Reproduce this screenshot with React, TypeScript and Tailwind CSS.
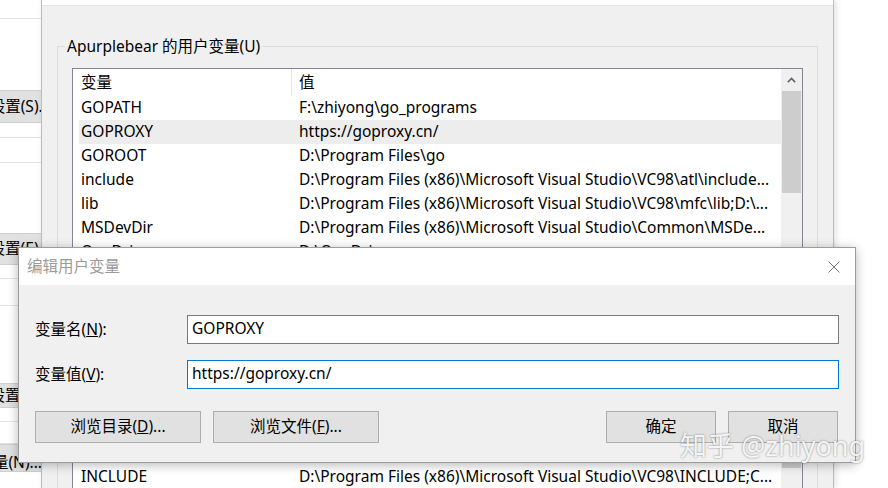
import type { ReactNode } from 'react'

const font = { fontFamily: '"Noto Sans", "Noto Sans CJK SC", sans-serif' }

type Row = { name: string; value: string; hot?: boolean }

const userVars: Row[] = [
  { name: 'GOPATH', value: 'F:\\zhiyong\\go_programs' },
  { name: 'GOPROXY', value: 'https://goproxy.cn/', hot: true },
  { name: 'GOROOT', value: 'D:\\Program Files\\go' },
  { name: 'include', value: 'D:\\Program Files (x86)\\Microsoft Visual Studio\\VC98\\atl\\include...' },
  { name: 'lib', value: 'D:\\Program Files (x86)\\Microsoft Visual Studio\\VC98\\mfc\\lib;D:\\...' },
  { name: 'MSDevDir', value: 'D:\\Program Files (x86)\\Microsoft Visual Studio\\Common\\MSDe...' },
  { name: 'OneDrive', value: 'D:\\OneDrive' },
  { name: 'Path', value: 'D:\\Program Files (x86)\\Microsoft Visual Studio\\Common\\Tools\\...' },
  { name: 'TEMP', value: '%USERPROFILE%\\AppData\\Local\\Temp' },
]

const sysVars: Row[] = [
  { name: 'ComSpec', value: 'C:\\WINDOWS\\system32\\cmd.exe' },
  { name: 'DriverData', value: 'C:\\Windows\\System32\\Drivers\\DriverData' },
  { name: 'FPS_BROWSER', value: 'application' },
  { name: 'INCLUDE', value: 'D:\\Program Files (x86)\\Microsoft Visual Studio\\VC98\\INCLUDE;C...' },
]

function ListView({ rows, height, thumbTop, thumbHeight }: { rows: Row[]; height: string; thumbTop: string; thumbHeight: string }) {
  return (
    <div className={`mx-[14px] mt-[12px] flex overflow-hidden border border-[#828790] bg-white ${height}`}>
      <div className="min-w-0 flex-1">
        <div className="flex h-[27px] items-center">
          <div className="w-[218px] pl-[8px]">变量</div>
          <div className="h-full w-px bg-[#e5e5e5]" />
          <div className="pl-[7px]">值</div>
        </div>
        <div className="pl-[6px]">
          {rows.map((r) => (
            <div key={r.name} className={`flex h-[24px] items-center ${r.hot ? 'bg-[#ededed]' : ''}`}>
              <div className="w-[220px] shrink-0 pl-[2px]">{r.name}</div>
              <div className="min-w-0 flex-1 overflow-hidden text-ellipsis whitespace-nowrap">{r.value}</div>
            </div>
          ))}
        </div>
      </div>
      <div className="flex w-[21px] shrink-0 flex-col bg-[#f0f0f0]">
        <div className="flex h-[22px] items-center justify-center">
          <svg width="9" height="6" viewBox="0 0 9 6">
            <path d="M0.8 5.2 L4.5 1.5 L8.2 5.2" fill="none" stroke="#606060" strokeWidth="1.6" />
          </svg>
        </div>
        <div className={`mx-[1px] bg-[#cdcdcd] ${thumbTop} ${thumbHeight}`} />
      </div>
    </div>
  )
}

function GroupBox({ title, children, className }: { title: string; children: ReactNode; className: string }) {
  return (
    <fieldset className={`mx-[15px] border border-[#dcdcdc] px-0 ${className}`}>
      <legend className="ml-[7px] px-[2px] leading-[20px]">{title}</legend>
      {children}
    </fieldset>
  )
}

function Band({ text, className, pr }: { text: string; className: string; pr: string }) {
  return (
    <div className={`flex items-center justify-end overflow-hidden whitespace-nowrap border-y border-[#cfcfcf] bg-[#e1e1e1] ${pr} ${className}`}>
      <span className="shrink-0">{text}</span>
    </div>
  )
}

function Button({ children, w }: { children: ReactNode; w: string }) {
  return (
    <div className={`flex h-[32px] items-center justify-center border border-[#adadad] bg-[#e1e1e1] ${w}`}>{children}</div>
  )
}

export default function App() {
  return (
    <div className="relative h-[488px] w-[888px] overflow-hidden bg-white text-[15.5px] text-black" style={font}>
      {/* window behind, left edge */}
      <div className="absolute left-0 top-0 flex h-full w-[51px] flex-col bg-white">
        <div className="h-[19px] shrink-0 border-b border-[#e3e3e3]" />
        <div className="h-[71px] shrink-0" />
        <Band text="设置(S)..." className="h-[33px] shrink-0" pr="pr-0" />
        <div className="h-[15px] shrink-0 border-b border-[#e3e3e3]" />
        <div className="h-[25px] shrink-0 border-b border-[#e3e3e3]" />
        <div className="h-[70px] shrink-0" />
        <Band text="设置(E)..." className="h-[32px] shrink-0" pr="pr-0" />
        <div className="h-[14px] shrink-0 border-b border-[#e3e3e3]" />
        <div className="h-[27px] shrink-0 border-b border-[#e3e3e3]" />
        <div className="h-[77px] shrink-0" />
        <Band text="设置(T)..." className="h-[25px] shrink-0" pr="pr-0" />
        <div className="h-[14px] shrink-0 border-b border-[#e3e3e3]" />
        <div className="h-[22px] shrink-0 border-b border-[#e3e3e3]" />
        <Band text="环境变量(N)..." className="h-[28px] shrink-0 pt-[10px]" pr="pr-[9px]" />
      </div>

      {/* environment variables window */}
      <div className="absolute left-[41px] top-0 flex h-full w-[793px] flex-col border-x border-[#bcbcbc] bg-[#f0f0f0] shadow-[2px_0_6px_rgba(0,0,0,0.12)]">
        <div className="h-[6px] shrink-0 border-b border-[#e4e4e4] bg-white" />
        <GroupBox title="Apurplebear 的用户变量(U)" className="mt-[30px] pb-[11px]">
          <ListView rows={userVars} height="h-[236px]" thumbTop="mt-0" thumbHeight="h-[102px]" />
        </GroupBox>
        <GroupBox title="系统变量(S)" className="mt-[17px] pb-[11px]">
          <ListView rows={sysVars} height="h-[200px]" thumbTop="mt-[60px]" thumbHeight="h-[20px]" />
        </GroupBox>
      </div>

      {/* edit dialog */}
      <div className="absolute left-[18px] top-[247px] flex h-[216px] w-[838px] flex-col border border-[#9c9c9c] bg-[#f0f0f0] shadow-[0_2px_10px_rgba(0,0,0,0.28)]">
        <div className="flex h-[37px] shrink-0 items-center justify-between bg-white pl-[8px] pr-[15px]">
          <span className="text-[#9a9a9a]">编辑用户变量</span>
          <svg width="12" height="12" viewBox="0 0 12 12">
            <path d="M0.5 0.5 L11.5 11.5 M11.5 0.5 L0.5 11.5" stroke="#777" strokeWidth="1" fill="none" />
          </svg>
        </div>
        <div className="flex flex-col px-[16px] pt-[30px]">
          <div className="flex items-center">
            <div className="w-[152px] shrink-0">
              变量名(<span className="underline">N</span>):
            </div>
            <div className="flex h-[29px] flex-1 items-center border border-[#7a7a7a] bg-white pb-[2px] pl-[4px]">GOPROXY</div>
          </div>
          <div className="mt-[16px] flex items-center">
            <div className="w-[152px] shrink-0">
              变量值(<span className="underline">V</span>):
            </div>
            <div className="flex h-[29px] flex-1 items-center border border-[#0078d7] bg-white pb-[2px] pl-[4px]">https://goproxy.cn/</div>
          </div>
          <div className="mt-[22px] flex items-center">
            <Button w="w-[166px]">
              浏览目录(<span className="underline">D</span>)...
            </Button>
            <div className="ml-[12px]">
              <Button w="w-[166px]">
                浏览文件(<span className="underline">F</span>)...
              </Button>
            </div>
            <div className="ml-auto mr-[1px] flex gap-[12px]">
              <Button w="w-[110px]">确定</Button>
              <Button w="w-[110px]">取消</Button>
            </div>
          </div>
        </div>
      </div>

      {/* watermark */}
      <div className="absolute left-[680px] top-[432px] whitespace-nowrap text-[27px] leading-none text-white/90 [text-shadow:0_0_2px_rgba(0,0,0,0.5)]">
        知乎 @zhiyong
      </div>
    </div>
  )
}
